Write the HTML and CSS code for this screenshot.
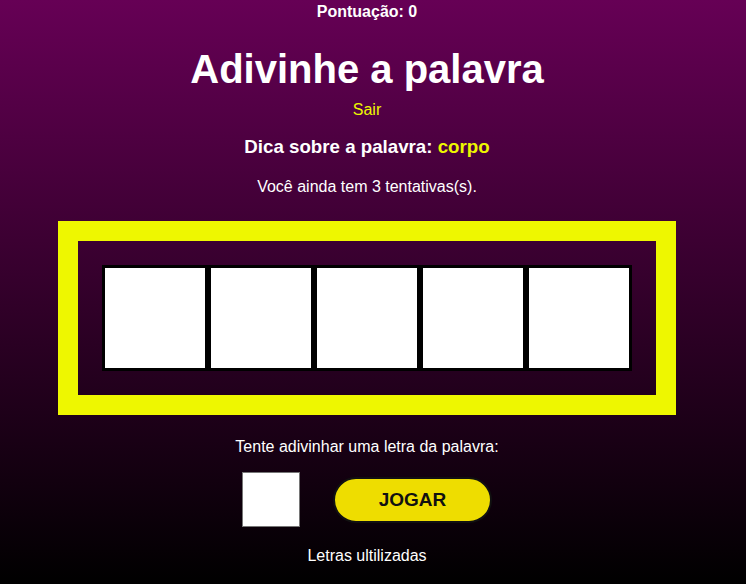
FILE: index.html
```html
<!DOCTYPE html>
<html lang="pt-BR">
<head>
<meta charset="utf-8">
<title>Adivinhe a palavra</title>
<link rel="stylesheet" href="styles.css">
</head>
<body>
<main class="page">
  <p class="score">Pontuação: 0</p>
  <h1 class="title">Adivinhe a palavra</h1>
  <a class="exit" href="#">Sair</a>
  <h3 class="hint">Dica sobre a palavra: <span class="hint-word">corpo</span></h3>
  <p class="tries">Você ainda tem 3 tentativas(s).</p>
  <div class="board">
    <div class="tile"></div>
    <div class="tile"></div>
    <div class="tile"></div>
    <div class="tile"></div>
    <div class="tile"></div>
  </div>
  <p class="prompt">Tente adivinhar uma letra da palavra:</p>
  <div class="guess-row">
    <input class="letter-input" type="text" maxlength="1" aria-label="Letra">
    <button class="play-btn" type="button">JOGAR</button>
  </div>
  <p class="used">Letras ultilizadas</p>
</main>
</body>
</html>
```

FILE: styles.css
```css
html, body {
  margin: 0;
  height: 100%;
}

body {
  background: linear-gradient(#660055, #000000);
  font-family: "Liberation Sans", Arial, sans-serif;
  color: #ffffff;
}

.page {
  display: flex;
  flex-direction: column;
  align-items: center;
  text-align: center;
  padding-right: 12px;
}

.score {
  margin: 3px 0 0;
  font-size: 16px;
  font-weight: bold;
}

.title {
  margin: 26px 0 0;
  font-size: 40px;
  font-weight: bold;
}

.exit {
  margin-top: 9px;
  font-size: 16px;
  color: #eef700;
  text-decoration: none;
}

.hint {
  margin: 17px 0 0;
  font-size: 18.72px;
  font-weight: bold;
}

.hint-word {
  color: #eef700;
}

.tries {
  margin: 20px 0 0;
  font-size: 16px;
}

.board {
  margin-top: 25px;
  display: flex;
  border: 20px solid #eef700;
  padding: 24px;
}

.tile {
  width: 100px;
  height: 100px;
  border: 3px solid #000000;
  background: #ffffff;
}

.prompt {
  margin: 23px 0 0;
  font-size: 16px;
}

.guess-row {
  margin-top: 16px;
  display: flex;
  align-items: center;
  gap: 33px;
}

.letter-input {
  box-sizing: border-box;
  width: 58px;
  height: 55px;
  margin: 0;
  border: 1px solid #767676;
  background: #ffffff;
  font-size: 24px;
  text-align: center;
}

.play-btn {
  box-sizing: border-box;
  width: 159px;
  height: 46px;
  margin: 0;
  border: 2px solid #111111;
  border-radius: 23px;
  background: #eedd00;
  color: #111111;
  font-family: "Liberation Sans", Arial, sans-serif;
  font-size: 19px;
  font-weight: bold;
}

.used {
  margin: 20px 0 0;
  font-size: 16px;
}
```
